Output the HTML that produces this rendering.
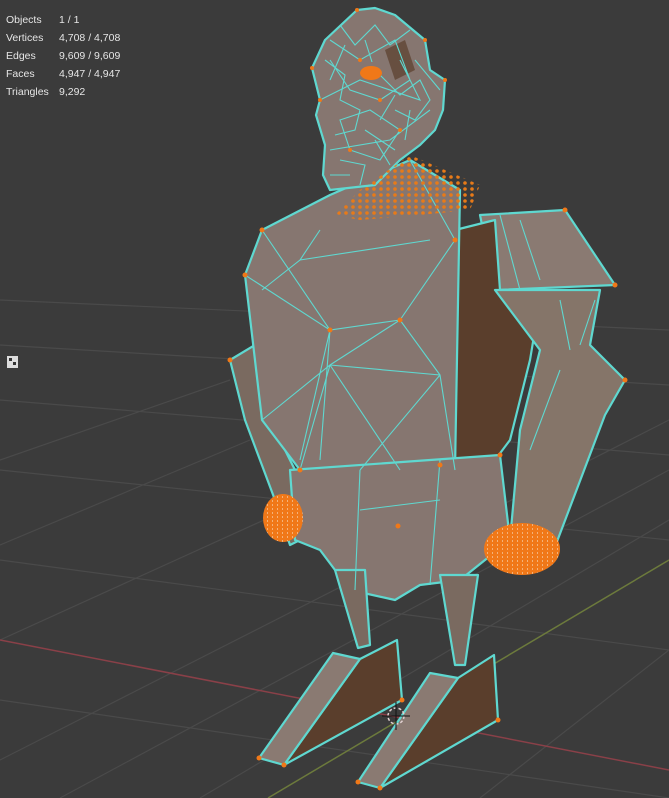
<!DOCTYPE html><html><head><style>
html,body{margin:0;padding:0;background:#3b3b3b;width:669px;height:798px;overflow:hidden;font-family:"Liberation Sans","DejaVu Sans",sans-serif}
.st{position:absolute;left:6px;top:11px;color:#e6e6e6;font-size:10.5px;line-height:18px}
.st span{display:inline-block;width:53px}
</style></head><body>
<svg width="669" height="798" style="position:absolute;left:0;top:0">
<defs>
<pattern id="dots" width="7" height="6" patternUnits="userSpaceOnUse"><circle cx="3" cy="3" r="1.8" fill="#e87a18"/></pattern>
<pattern id="rib" width="5" height="40" patternUnits="userSpaceOnUse"><rect width="5" height="40" fill="#f07818"/><line x1="2.5" y1="0" x2="2.5" y2="40" stroke="#f5c090" stroke-width="0.8" stroke-dasharray="2 2"/></pattern>
</defs>
<g stroke="#4a4a4a" stroke-width="1.2" fill="none">
<line x1="0" y1="300" x2="669" y2="330"/><line x1="0" y1="345" x2="669" y2="385"/>
<line x1="0" y1="400" x2="669" y2="455"/><line x1="0" y1="470" x2="669" y2="540"/>
<line x1="0" y1="560" x2="669" y2="650"/><line x1="0" y1="700" x2="669" y2="798"/>
<line x1="0" y1="545" x2="250" y2="440"/><line x1="0" y1="640" x2="330" y2="490"/>
<line x1="0" y1="760" x2="669" y2="420"/><line x1="60" y1="798" x2="669" y2="470"/>
<line x1="200" y1="798" x2="669" y2="520"/><line x1="480" y1="798" x2="669" y2="650"/>
<line x1="0" y1="460" x2="230" y2="380"/>
</g>
<line x1="0" y1="640" x2="669" y2="770" stroke="#8a4048" stroke-width="1.5"/>
<line x1="268" y1="798" x2="669" y2="560" stroke="#6c7a3c" stroke-width="1.5"/>
<g stroke="#5fd8d0" stroke-width="2.2" stroke-linejoin="round">
<polygon fill="#8a7a72" points="480,215 565,210 615,285 495,290"/>
<polygon fill="#5a3e2c" points="455,230 495,220 500,290 540,300 530,360 510,440 495,460 455,470"/>
<polygon fill="#857569" points="495,290 600,290 590,345 625,380 605,415 550,560 510,540 520,430 540,350"/>
<polygon fill="#7a6a60" points="230,360 255,345 270,420 305,490 300,540 290,545 275,500 245,420"/>
<polygon fill="#867670" points="262,230 330,195 410,160 460,190 455,470 300,470 262,420 245,275"/>
<polygon fill="#867670" points="290,470 500,455 510,540 460,580 420,585 395,600 350,590 320,550 295,540"/>
<polygon fill="#7a6a60" points="335,570 365,570 370,645 358,648"/>
<polygon fill="#7a6a60" points="440,575 478,575 465,665 455,665"/>
<polygon fill="#5a3e2c" points="360,659 397,640 402,700 284,765"/>
<polygon fill="#8a7a72" points="333,653 360,659 284,765 259,758"/>
<polygon fill="#5a3e2c" points="458,678 494,655 498,720 380,788"/>
<polygon fill="#8a7a72" points="430,673 458,678 380,788 358,782"/>
<polygon fill="#867670" points="357,10 375,8 395,15 425,40 430,70 445,80 443,110 435,130 420,145 400,160 375,185 330,190 323,175 325,145 316,115 320,100 312,68 325,40"/>
</g>
<polygon fill="#5a3e2c" points="385,50 405,40 415,70 395,80" opacity="0.7"/>
<g stroke="#5fd8d0" stroke-width="1.1" fill="none">
<path d="M330,40 L360,60 L395,40 L410,80 L380,100 L350,90 L330,60 M340,120 L370,110 L400,130 L380,160 L350,150 Z M320,100 L360,80 L420,100 L400,60 M330,150 L390,140 L430,110"/>
<path d="M340,25 L355,45 L375,25 L390,45 L410,30 M325,60 L345,75 L340,100 L360,110 L355,130 L335,135 M380,75 L400,95 L420,80 L430,100 L415,120 L395,110 M345,45 L330,80 M365,40 L372,62 M395,95 L380,120 M410,110 L405,140 M340,160 L365,165 L360,185 M390,165 L375,140 M330,175 L350,175 M415,60 L440,90 M365,130 L395,150"/>
<path d="M262,230 L330,330 L400,320 L455,240 L410,160 M245,275 L330,330 L320,460 M330,330 L300,460 M400,320 L440,375 L455,470 M330,365 L440,375 M400,320 L330,365 L262,420 M330,365 L300,470 M440,375 L360,470 M330,365 L400,470 M300,260 L430,240 M262,290 L300,260 L320,230"/>
<path d="M360,470 L355,590 M440,460 L430,585 M360,510 L440,500 M500,215 L520,290 M560,300 L570,350 M560,370 L530,450 M520,220 L540,280 M595,300 L580,345"/>
</g>
<polygon points="335,215 360,190 410,155 445,170 480,185 470,210 420,215 360,220" fill="url(#dots)"/>
<ellipse cx="371" cy="73" rx="11" ry="7" fill="#f07818"/>
<ellipse cx="283" cy="518" rx="20" ry="24" fill="url(#rib)"/>
<ellipse cx="522" cy="549" rx="38" ry="26" fill="url(#rib)"/>
<g fill="#f07818"><circle cx="398" cy="526" r="2.5"/><circle cx="262" cy="230" r="2.5"/><circle cx="330" cy="330" r="2.5"/><circle cx="400" cy="320" r="2.5"/><circle cx="455" cy="240" r="2.5"/><circle cx="245" cy="275" r="2.5"/><circle cx="565" cy="210" r="2.5"/><circle cx="615" cy="285" r="2.5"/><circle cx="625" cy="380" r="2.5"/><circle cx="230" cy="360" r="2.5"/><circle cx="259" cy="758" r="2.5"/><circle cx="284" cy="765" r="2.5"/><circle cx="358" cy="782" r="2.5"/><circle cx="380" cy="788" r="2.5"/><circle cx="402" cy="700" r="2.5"/><circle cx="498" cy="720" r="2.5"/><circle cx="357" cy="10" r="2"/><circle cx="425" cy="40" r="2"/><circle cx="445" cy="80" r="2"/><circle cx="312" cy="68" r="2"/><circle cx="320" cy="100" r="2"/><circle cx="360" cy="60" r="2"/><circle cx="380" cy="100" r="2"/><circle cx="350" cy="150" r="2"/><circle cx="400" cy="130" r="2"/><circle cx="300" cy="470" r="2.5"/><circle cx="440" cy="465" r="2.5"/><circle cx="500" cy="455" r="2.5"/></g>
<circle cx="396" cy="716" r="8" fill="none" stroke="#e0d0d0" stroke-width="1.5" stroke-dasharray="3 2"/>
<path d="M396,702 V730 M382,716 H410" stroke="#111" stroke-width="1"/>
<rect x="7" y="356" width="11" height="12" fill="#ddd"/><rect x="9" y="358" width="3" height="3" fill="#333"/><rect x="13" y="362" width="3" height="3" fill="#333"/>
</svg>
<div class="st"><div><span>Objects</span>1 / 1</div><div><span>Vertices</span>4,708 / 4,708</div><div><span>Edges</span>9,609 / 9,609</div><div><span>Faces</span>4,947 / 4,947</div><div><span>Triangles</span>9,292</div></div>
</body></html>
